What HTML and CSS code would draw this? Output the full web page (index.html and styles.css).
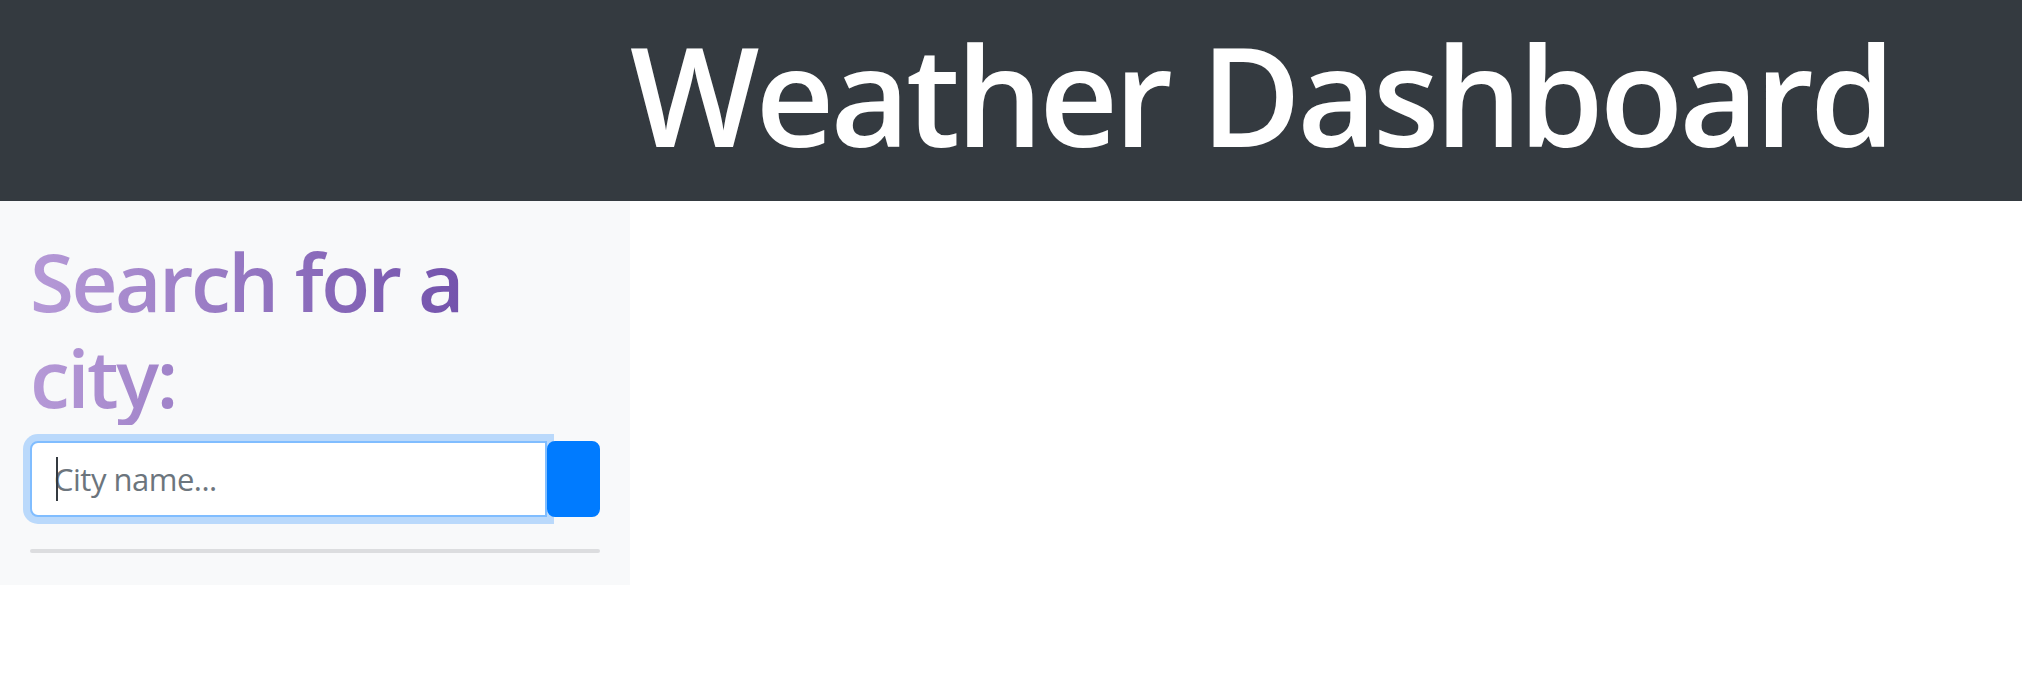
FILE: index.html
```html
<!DOCTYPE html>
<html lang="en">
<head>
<meta charset="utf-8">
<title>Weather Dashboard</title>
<link rel="stylesheet" href="styles.css">
</head>
<body>
<header class="topbar">
  <div class="topbar-spacer"></div>
  <h1 class="title">Weather Dashboard</h1>
</header>
<main class="layout">
  <aside class="sidebar">
    <h2 class="search-heading">Search for a city:</h2>
    <form class="search-group">
      <div class="search-field">
        <input class="search-input" type="text" placeholder="City name...">
        <span class="caret"></span>
      </div>
      <button class="search-btn" type="button"></button>
    </form>
    <hr class="divider">
  </aside>
  <section class="content"></section>
</main>
</body>
</html>
```

FILE: styles.css
```css
* { box-sizing: border-box; }
html, body { margin: 0; padding: 0; background: #ffffff; }
body { font-family: "Open Sans", "Noto Sans", sans-serif; }

.topbar {
  display: flex;
  align-items: flex-start;
  height: 201px;
  padding-top: 0;
  background: #343a40;
}
.topbar-spacer { width: 630px; flex: none; }
.title {
  margin: 0;
  padding-right: 12px;
  color: #ffffff;
  font-size: 137px;
  font-weight: 600;
  line-height: 188px;
  letter-spacing: -4px;
  white-space: nowrap;
}

.layout { display: flex; align-items: flex-start; }
.sidebar {
  width: 630px;
  flex: none;
  background: #f8f9fa;
  padding: 32px 30px 1px 30px;
}
.content { flex: 1; }

.search-heading {
  margin: 0 0 16px 0;
  font-size: 80px;
  font-weight: 600;
  line-height: 96px;
  letter-spacing: -2.5px;
  background: linear-gradient(to right, #b69ad7 0%, #5e3c9e 100%);
  -webkit-background-clip: text;
  background-clip: text;
  color: transparent;
}

.search-group { display: flex; margin: 0; }
.search-field { position: relative; flex: 1; display: flex; }
.search-input {
  flex: 1;
  width: 100%;
  height: 76px;
  padding: 0 22px;
  border: 2px solid #80bdff;
  border-radius: 8px 0 0 8px;
  background: #ffffff;
  box-shadow: 0 0 0 7px rgba(0, 123, 255, 0.25);
  font-family: "Open Sans", "Noto Sans", sans-serif;
  font-size: 31px;
  color: #495057;
  outline: none;
  caret-color: transparent;
}
.search-input::placeholder { color: #6c757d; opacity: 1; letter-spacing: -0.5px; }
.caret {
  position: absolute;
  left: 26px;
  top: 16px;
  width: 2px;
  height: 44px;
  background: #343a40;
}
.search-btn {
  width: 53px;
  height: 76px;
  flex: none;
  margin: 0;
  padding: 0;
  border: 2px solid #007bff;
  border-radius: 8px;
  background: #007bff;
}

.divider {
  margin: 32px 0 31px 0;
  height: 4px;
  border: 0;
  border-radius: 2px;
  background: #dcdddf;
}
```
